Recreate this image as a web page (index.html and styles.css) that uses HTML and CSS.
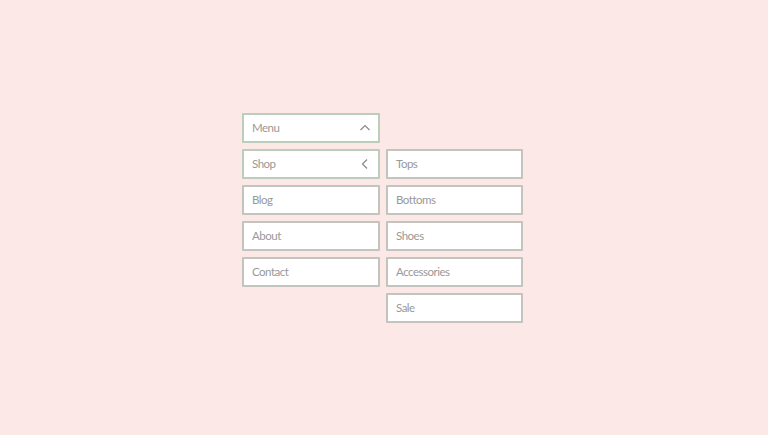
FILE: index.html
```html
<!DOCTYPE html>
<html lang="en">
<head>
    <meta charset="UTF-8">
    <meta name="viewport" content="width=device-width, initial-scale=1.0">
    <title>Menu</title>
    <link rel="stylesheet" href="styles.css">
</head>
<body>
    <div class="nav">
        <div class="column">
            <div class="item active">Menu
                <svg class="chev" width="12" height="12" viewBox="0 0 12 12"><path d="M1.5 8 L6 3.5 L10.5 8" fill="none" stroke="#8a8a8a" stroke-width="1.2"/></svg>
            </div>
            <div class="item active">Shop
                <svg class="chev" width="12" height="12" viewBox="0 0 12 12"><path d="M8 1.5 L3.5 6 L8 10.5" fill="none" stroke="#8a8a8a" stroke-width="1.2"/></svg>
            </div>
            <div class="item">Blog</div>
            <div class="item">About</div>
            <div class="item">Contact</div>
        </div>
        <div class="column sub">
            <div class="item">Tops</div>
            <div class="item">Bottoms</div>
            <div class="item">Shoes</div>
            <div class="item">Accessories</div>
            <div class="item">Sale</div>
        </div>
    </div>
</body>
</html>
```
FILE: styles.css
```css
body {
    margin: 0;
    height: 435px;
    background: #fce8e6;
    font-family: Lato, "Open Sans", sans-serif;
}
.nav {
    display: flex;
    gap: 6px;
    padding: 113px 0 0 242px;
}
.column {
    display: flex;
    flex-direction: column;
    gap: 6px;
    width: 138px;
}
.sub {
    margin-top: 36px;
    width: 137px;
}
.item {
    box-sizing: border-box;
    height: 30px;
    display: flex;
    align-items: center;
    justify-content: space-between;
    padding: 0 8px 1px 8px;
    background: #fff;
    border: 2px solid #c3c4bd;
    border-radius: 1px;
    color: #999;
    font-size: 11.5px;
    letter-spacing: -0.5px;
}
.item.active {
    border-color: #bccdbb;
}
.chev {
    margin-right: -1px;
}
```
